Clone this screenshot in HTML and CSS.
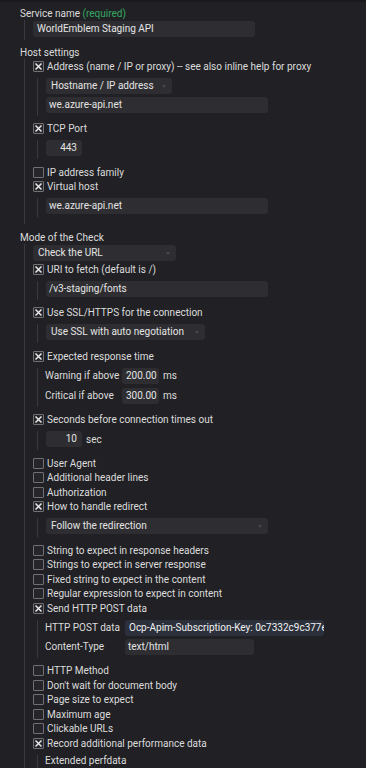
FILE: index.html
```html
<!DOCTYPE html>
<html>
<head>
<meta charset="utf-8">
<link rel="stylesheet" href="styles.css">
</head>
<body>
<div class="page">
  <div class="title">Service name <span class="req">(required)</span></div>
  <div class="group g-service">
    <div class="field w222">WorldEmblem Staging API</div>
  </div>

  <div class="title t-host">Host settings</div>
  <div class="group g-host">
    <div class="row"><span class="cb on"><svg viewBox="0 0 9 9"><path d="M1.5 1.5L7.5 7.5M7.5 1.5L1.5 7.5"/></svg></span><span>Address (name / IP or proxy) -- see also inline help for proxy</span></div>
    <div class="sub">
      <div class="select w126">Hostname / IP address</div>
      <div class="field w222 gap">we.azure-api.net</div>
    </div>
    <div class="row"><span class="cb on"><svg viewBox="0 0 9 9"><path d="M1.5 1.5L7.5 7.5M7.5 1.5L1.5 7.5"/></svg></span><span>TCP Port</span></div>
    <div class="sub">
      <div class="field num w36">443</div>
    </div>
    <div class="row"><span class="cb"></span><span>IP address family</span></div>
    <div class="row"><span class="cb on"><svg viewBox="0 0 9 9"><path d="M1.5 1.5L7.5 7.5M7.5 1.5L1.5 7.5"/></svg></span><span>Virtual host</span></div>
    <div class="sub">
      <div class="field w222">we.azure-api.net</div>
    </div>
  </div>

  <div class="title t-mode">Mode of the Check</div>
  <div class="group g-mode">
    <div class="select w143 first">Check the URL</div>
    <div class="row"><span class="cb on"><svg viewBox="0 0 9 9"><path d="M1.5 1.5L7.5 7.5M7.5 1.5L1.5 7.5"/></svg></span><span>URI to fetch (default is /)</span></div>
    <div class="sub">
      <div class="field w222">/v3-staging/fonts</div>
    </div>
    <div class="row"><span class="cb on"><svg viewBox="0 0 9 9"><path d="M1.5 1.5L7.5 7.5M7.5 1.5L1.5 7.5"/></svg></span><span>Use SSL/HTTPS for the connection</span></div>
    <div class="sub">
      <div class="select w159">Use SSL with auto negotiation</div>
    </div>
    <div class="row"><span class="cb on"><svg viewBox="0 0 9 9"><path d="M1.5 1.5L7.5 7.5M7.5 1.5L1.5 7.5"/></svg></span><span>Expected response time</span></div>
    <div class="sub">
      <div class="lrow"><span class="lbl l77">Warning if above</span><span class="field w37 clip">200.00</span><span class="unit">ms</span></div>
      <div class="lrow gap4"><span class="lbl l77">Critical if above</span><span class="field w37 clip">300.00</span><span class="unit">ms</span></div>
    </div>
    <div class="row"><span class="cb on"><svg viewBox="0 0 9 9"><path d="M1.5 1.5L7.5 7.5M7.5 1.5L1.5 7.5"/></svg></span><span>Seconds before connection times out</span></div>
    <div class="sub">
      <div class="lrow"><span class="field num w36">10</span><span class="unit">sec</span></div>
    </div>
    <div class="row"><span class="cb"></span><span>User Agent</span></div>
    <div class="row"><span class="cb"></span><span>Additional header lines</span></div>
    <div class="row"><span class="cb"></span><span>Authorization</span></div>
    <div class="row"><span class="cb on"><svg viewBox="0 0 9 9"><path d="M1.5 1.5L7.5 7.5M7.5 1.5L1.5 7.5"/></svg></span><span>How to handle redirect</span></div>
    <div class="sub">
      <div class="select w222">Follow the redirection</div>
    </div>
    <div class="row"><span class="cb"></span><span>String to expect in response headers</span></div>
    <div class="row"><span class="cb"></span><span>Strings to expect in server response</span></div>
    <div class="row"><span class="cb"></span><span>Fixed string to expect in the content</span></div>
    <div class="row"><span class="cb"></span><span>Regular expression to expect in content</span></div>
    <div class="row"><span class="cb on"><svg viewBox="0 0 9 9"><path d="M1.5 1.5L7.5 7.5M7.5 1.5L1.5 7.5"/></svg></span><span>Send HTTP POST data</span></div>
    <div class="sub">
      <div class="lrow"><span class="lbl l79">HTTP POST data</span><span class="field w199 clip focus">Ocp-Apim-Subscription-Key: 0c7332c9c377e4a1</span></div>
      <div class="lrow gap"><span class="lbl l79">Content-Type</span><span class="field w129">text/html</span></div>
    </div>
    <div class="row"><span class="cb"></span><span>HTTP Method</span></div>
    <div class="row"><span class="cb"></span><span>Don't wait for document body</span></div>
    <div class="row"><span class="cb"></span><span>Page size to expect</span></div>
    <div class="row"><span class="cb"></span><span>Maximum age</span></div>
    <div class="row"><span class="cb"></span><span>Clickable URLs</span></div>
    <div class="row"><span class="cb on"><svg viewBox="0 0 9 9"><path d="M1.5 1.5L7.5 7.5M7.5 1.5L1.5 7.5"/></svg></span><span>Record additional performance data</span></div>
    <div class="sub last">
      <div class="plain">Extended perfdata</div>
    </div>
  </div>
</div>
</body>
</html>
```

FILE: styles.css
```css
html, body {
  margin: 0;
  padding: 0;
  background: #212125;
  overflow: hidden;
}
body {
  border-top: 2px solid #19191c;
  font-family: Roboto, "Liberation Sans", Arial, sans-serif;
  font-size: 10px;
  color: #dcdcdc;
}
.page {
  padding: 6px 0 0 20px;
  height: 760px;
  overflow: hidden;
}
.title {
  height: 12px;
  line-height: 12px;
  white-space: nowrap;
}
.req {
  color: #34a862;
}
.t-host { margin-top: 7px; }
.t-mode { margin-top: 8px; }
.group {
  margin-left: 4px;
  border-left: 1px solid #3a3a3e;
  padding-left: 8px;
}
.g-service {
  padding-top: 1px;
  padding-bottom: 3px;
}
.g-host {
  padding-bottom: 1px;
}
.g-mode {
  padding-top: 1px;
  padding-bottom: 40px;
}
.row {
  display: flex;
  align-items: center;
  height: 14.5px;
  white-space: nowrap;
}
.cb {
  flex: none;
  box-sizing: border-box;
  width: 11px;
  height: 11px;
  border: 1px solid #707074;
  background: #26262a;
  border-radius: 1px;
  margin-right: 3px;
  display: flex;
  align-items: center;
  justify-content: center;
}
.cb svg {
  width: 9px;
  height: 9px;
  display: block;
}
.cb svg path {
  stroke: #e8e8e8;
  stroke-width: 1.5;
  fill: none;
}
.sub {
  margin: 4px 0 6px 4px;
  border-left: 1px solid #3a3a3e;
  padding-left: 8px;
  padding-bottom: 3px;
}
.sub.last {
  margin-bottom: 0;
  padding-bottom: 30px;
}
.field, .select {
  box-sizing: border-box;
  height: 16px;
  line-height: 16px;
  background: #2e2e32;
  border-radius: 3px;
  padding: 0 4px 0 3px;
  white-space: nowrap;
  overflow: hidden;
  color: #e4e4e4;
}
.g-service .field { padding-left: 4px; }
.field.gap, .lrow.gap { margin-top: 3px; }
.lrow.gap4 { margin-top: 4px; }
.select {
  position: relative;
  padding-left: 5px;
}
.select::after {
  content: "";
  position: absolute;
  right: 6px;
  top: 7px;
  border-left: 2.5px solid transparent;
  border-right: 2.5px solid transparent;
  border-top: 3px solid #48484d;
}
.select.first { margin-bottom: 1px; }
.num {
  text-align: right;
  padding-right: 5px;
}
.clip {
  padding-left: 4px;
  padding-right: 0;
}
.focus {
  background: #2b303b;
  color: #f2f2f2;
}
.w222 { width: 222px; }
.w126 { width: 126px; }
.w143 { width: 143px; }
.w159 { width: 159px; }
.w36 { width: 36px; }
.w37 { width: 37px; }
.w199 { width: 199px; }
.w129 { width: 129px; }
.lrow {
  display: flex;
  align-items: center;
  height: 16px;
  white-space: nowrap;
}
.lbl { flex: none; }
.l77 { width: 77px; margin-left: -1px; }
.l79 { width: 80px; margin-left: -1px; }
.unit { margin-left: 4px; }
.plain {
  height: 12px;
  line-height: 12px;
  margin-left: -1px;
}
```
